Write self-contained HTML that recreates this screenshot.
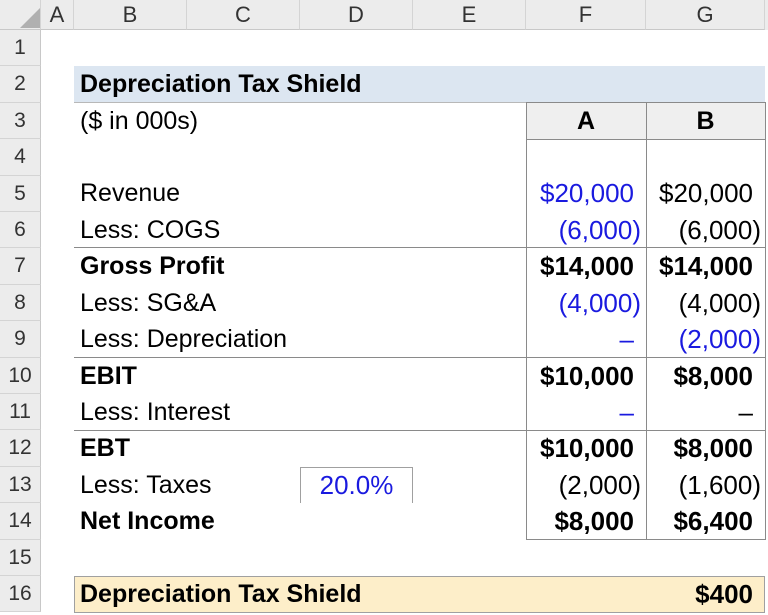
<!DOCTYPE html><html><head><style>
*{margin:0;padding:0;box-sizing:border-box}
body{width:768px;height:615px;background:#fff;position:relative;overflow:hidden;font-family:"Liberation Sans",sans-serif}
.hd{position:absolute;top:0;height:30px;background:#ececec;border-right:1px solid #d4d4d4;border-bottom:1px solid #c8c8c8;color:#333;font-size:22px;text-align:center;line-height:30px}
.rn{position:absolute;left:0;width:41px;height:36.4px;background:#ececec;border-bottom:1px solid #d4d4d4;border-right:1px solid #c8c8c8;color:#333;font-size:21px;text-align:center;line-height:36px}
.t{position:absolute;font-size:25px;line-height:36px;height:36px;white-space:nowrap;color:#000}
.n{font-size:26px}
.b{font-weight:bold}
.u{color:#1a1adf}
.r{text-align:right}
.hl{position:absolute;height:1px;background:#8a8a8a}
.vl{position:absolute;width:1px;background:#8a8a8a}
</style></head><body>
<div class="hd" style="left:0;width:41px"></div>
<svg style="position:absolute;left:20px;top:8px" width="20" height="20"><polygon points="20,0 20,20 0,20" fill="#b0b0b0"/></svg>
<div class="hd" style="left:41px;width:33px">A</div>
<div class="hd" style="left:74px;width:113px">B</div>
<div class="hd" style="left:187px;width:113px">C</div>
<div class="hd" style="left:300px;width:113px">D</div>
<div class="hd" style="left:413px;width:113px">E</div>
<div class="hd" style="left:526px;width:120px">F</div>
<div class="hd" style="left:646px;width:119px">G</div>
<div class="hd" style="left:765px;width:3px;border:none"></div>

<div class="rn" style="top:30px">1</div>
<div class="rn" style="top:66.4px">2</div>
<div class="rn" style="top:102.8px">3</div>
<div class="rn" style="top:139.2px">4</div>
<div class="rn" style="top:175.6px">5</div>
<div class="rn" style="top:212px">6</div>
<div class="rn" style="top:248.4px">7</div>
<div class="rn" style="top:284.8px">8</div>
<div class="rn" style="top:321.2px">9</div>
<div class="rn" style="top:357.6px">10</div>
<div class="rn" style="top:394px">11</div>
<div class="rn" style="top:430.4px">12</div>
<div class="rn" style="top:466.8px">13</div>
<div class="rn" style="top:503.2px">14</div>
<div class="rn" style="top:539.6px">15</div>
<div class="rn" style="top:576px">16</div>

<div style="position:absolute;left:74px;top:66px;width:691px;height:36px;background:#dce6f1"></div>
<div class="hl" style="left:74px;top:102px;width:452px;background:#b8b8b8"></div>
<div style="position:absolute;left:526px;top:102px;width:239px;height:37px;background:#efefef"></div>
<div class="hl" style="left:526px;top:102px;width:239px"></div>
<div class="hl" style="left:526px;top:139px;width:239px"></div>
<div class="hl" style="left:526px;top:539px;width:239px"></div>
<div class="vl" style="left:526px;top:102px;height:438px"></div>
<div class="vl" style="left:646px;top:102px;height:438px"></div>
<div class="vl" style="left:765px;top:102px;height:438px"></div>
<div class="hl" style="left:74px;top:247px;width:691px"></div>
<div class="hl" style="left:74px;top:357px;width:691px"></div>
<div class="hl" style="left:74px;top:430px;width:691px"></div>
<div style="position:absolute;left:300px;top:467px;width:113px;height:36px;border:1px solid #a0a0a0;border-bottom:none"></div>
<div style="position:absolute;left:74px;top:576px;width:691px;height:37px;background:#fdeec9;border:1px solid #a0a0a0"></div>

<div class="t b" style="left:80px;top:66px">Depreciation Tax Shield</div>
<div class="t" style="left:80px;top:103px">($ in 000s)</div>
<div class="t b" style="left:526px;top:103px;width:120px;text-align:center">A</div>
<div class="t b" style="left:646px;top:103px;width:119px;text-align:center">B</div>

<div class="t" style="left:80px;top:175px">Revenue</div>
<div class="t" style="left:80px;top:212px">Less: COGS</div>
<div class="t b" style="left:80px;top:248px">Gross Profit</div>
<div class="t" style="left:80px;top:285px">Less: SG&amp;A</div>
<div class="t" style="left:80px;top:321px">Less: Depreciation</div>
<div class="t b" style="left:80px;top:358px">EBIT</div>
<div class="t" style="left:80px;top:394px">Less: Interest</div>
<div class="t b" style="left:80px;top:430px">EBT</div>
<div class="t" style="left:80px;top:467px">Less: Taxes</div>
<div class="t u n" style="left:300px;top:467px;width:113px;text-align:center">20.0%</div>
<div class="t b" style="left:80px;top:503px">Net Income</div>
<div class="t b" style="left:80px;top:576px">Depreciation Tax Shield</div>

<div class="t n r u" style="left:500px;width:134px;top:175px">$20,000</div>
<div class="t n r" style="left:620px;width:133px;top:175px">$20,000</div>
<div class="t n r u" style="left:500px;width:141px;top:212px">(6,000)</div>
<div class="t n r" style="left:620px;width:141px;top:212px">(6,000)</div>
<div class="t n r b" style="left:500px;width:134px;top:248px">$14,000</div>
<div class="t n r b" style="left:620px;width:133px;top:248px">$14,000</div>
<div class="t n r u" style="left:500px;width:141px;top:285px">(4,000)</div>
<div class="t n r" style="left:620px;width:141px;top:285px">(4,000)</div>
<div class="t n r u" style="left:500px;width:134px;top:321px">–</div>
<div class="t n r u" style="left:620px;width:141px;top:321px">(2,000)</div>
<div class="t n r b" style="left:500px;width:134px;top:358px">$10,000</div>
<div class="t n r b" style="left:620px;width:133px;top:358px">$8,000</div>
<div class="t n r u" style="left:500px;width:134px;top:394px">–</div>
<div class="t n r" style="left:620px;width:133px;top:394px">–</div>
<div class="t n r b" style="left:500px;width:134px;top:430px">$10,000</div>
<div class="t n r b" style="left:620px;width:133px;top:430px">$8,000</div>
<div class="t n r" style="left:500px;width:141px;top:467px">(2,000)</div>
<div class="t n r" style="left:620px;width:141px;top:467px">(1,600)</div>
<div class="t n r b" style="left:500px;width:134px;top:503px">$8,000</div>
<div class="t n r b" style="left:620px;width:133px;top:503px">$6,400</div>
<div class="t n r b" style="left:620px;width:133px;top:576px">$400</div>
</body></html>
